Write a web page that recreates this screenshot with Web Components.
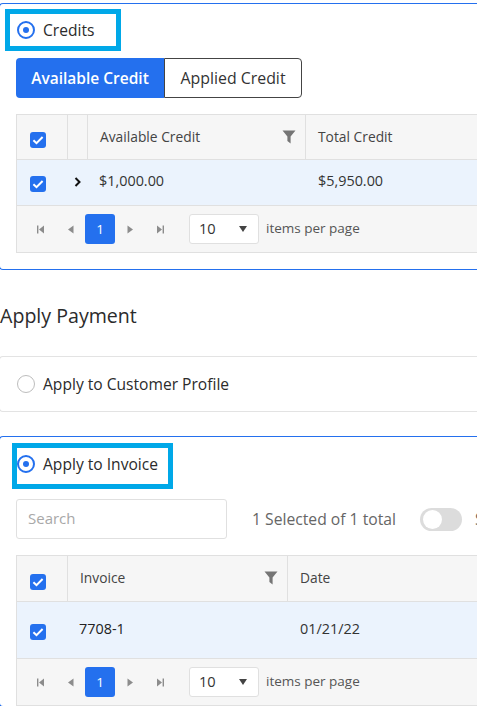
<!DOCTYPE html>
<html lang="en">
<head>
<meta charset="utf-8">
<title>Apply Payment</title>
<style>
  html, body { margin: 0; background: #fff; }
  body { font: 14px "Open Sans", "Noto Sans", sans-serif; color: #333; width: 477px; height: 706px; overflow: hidden; }
  .heading { margin: 31px 0 25px; font-size: 19.6px; line-height: 30px; color: #2b2b2b; }
  .mark-credits { margin: 5px 0 0 5px; }
  .mark-invoice { margin: 6px 0 0 12px; padding-bottom: 4px; }
  credit-tabs { margin: 7px 0 16px 16px; }
  grid-shell { margin-left: 16px; }
</style>
</head>
<body>
<pay-page>
  <pay-card accent style="padding-bottom:16px">
    <mark-box class="mark-credits" style="--w:116px;--h:42px;--pad:7px">
      <pay-radio checked>Credits</pay-radio>
    </mark-box>
    <credit-tabs></credit-tabs>
    <grid-shell>
      <grid-row head style="--row-h:44px">
        <grid-cell w="51" divider><grid-check></grid-check></grid-cell>
        <grid-cell w="20" divider></grid-cell>
        <grid-cell w="218" divider pad="12" filter>Available Credit</grid-cell>
        <grid-cell w="300" pad="12">Total Credit</grid-cell>
      </grid-row>
      <grid-row selected style="--row-h:45px">
        <grid-cell w="51"><grid-check></grid-check></grid-cell>
        <grid-cell w="20" chevron></grid-cell>
        <grid-cell w="218" pad="11" body>$1,000.00</grid-cell>
        <grid-cell w="300" pad="12" body>$5,950.00</grid-cell>
      </grid-row>
      <grid-pager></grid-pager>
    </grid-shell>
  </pay-card>

  <div class="heading">Apply Payment</div>

  <pay-card>
    <mark-box style="--w:auto;--h:54px;--pad:17px;--bw:0px">
      <pay-radio>Apply to Customer Profile</pay-radio>
    </mark-box>
  </pay-card>

  <pay-card accent style="margin-top:24px">
    <mark-box class="mark-invoice" style="--w:161px;--h:46px;--pad:0px">
      <pay-radio checked>Apply to Invoice</pay-radio>
    </mark-box>
    <grid-toolbar></grid-toolbar>
    <grid-shell>
      <grid-row head>
        <grid-cell w="51" divider><grid-check></grid-check></grid-cell>
        <grid-cell w="220" divider pad="12" filter>Invoice</grid-cell>
        <grid-cell w="300" pad="12">Date</grid-cell>
      </grid-row>
      <grid-row selected style="--row-h:56px">
        <grid-cell w="51"><grid-check></grid-check></grid-cell>
        <grid-cell w="220" pad="11" body strong>7708-1</grid-cell>
        <grid-cell w="300" pad="12" body>01/21/22</grid-cell>
      </grid-row>
      <grid-pager></grid-pager>
    </grid-shell>
  </pay-card>
</pay-page>

<script>
// Small helper so each element stays a few lines
function shadow(el, html) {
  el.attachShadow({ mode: 'open' }).innerHTML = html;
}

class PayPage extends HTMLElement {
  constructor() {
    super();
    shadow(this, `<style>:host { display: block; width: 477px; padding-top: 3px; overflow: hidden; }</style><slot></slot>`);
  }
}

class PayCard extends HTMLElement {
  constructor() {
    super();
    shadow(this, `<style>
      :host { display: block; width: 800px; box-sizing: border-box; border: 1px solid #e3e3e3; border-right: 0; border-radius: 4px 0 0 4px; margin-left: -1px; }
      :host([accent]) { border-color: #2470ee; }
    </style><slot></slot>`);
  }
}

class MarkBox extends HTMLElement {
  constructor() {
    super();
    shadow(this, `<style>
      :host { display: flex; align-items: center; box-sizing: border-box; width: var(--w); height: var(--h); padding-left: var(--pad); border: var(--bw, 5px) solid #00a8e8; }
    </style><slot></slot>`);
  }
}

class PayRadio extends HTMLElement {
  constructor() {
    super();
    shadow(this, `<style>
      :host { display: inline-flex; align-items: center; gap: 8px; font-size: 15.6px; color: #2b2b2b; white-space: nowrap; }
      i { display: block; width: 18px; height: 18px; box-sizing: border-box; border-radius: 50%; border: 1px solid #bdbdbd; background: #fff; position: relative; }
      :host([checked]) i { border: 2px solid #2470ee; }
      :host([checked]) i::after { content: ""; position: absolute; left: 4px; top: 4px; width: 6px; height: 6px; border-radius: 50%; background: #2470ee; }
    </style><i></i><slot></slot>`);
  }
}

class CreditTabs extends HTMLElement {
  constructor() {
    super();
    shadow(this, `<style>
      :host { display: flex; height: 40px; width: 286px; }
      div { display: flex; align-items: center; justify-content: center; box-sizing: border-box; }
      .on { width: 148px; background: #2470ee; color: #fff; font-weight: 600; font-size: 15.5px; border-radius: 4px 0 0 4px; }
      .off { width: 138px; background: #fff; color: #333; font-size: 15.9px; border: 1px solid #444; border-radius: 0 4px 4px 0; }
    </style><div class="on">Available Credit</div><div class="off">Applied Credit</div>`);
  }
}

class GridShell extends HTMLElement {
  constructor() {
    super();
    shadow(this, `<style>
      :host { display: block; width: 700px; box-sizing: border-box; border: 1px solid #e0e0e0; border-right: 0; background: #f6f6f6; }
    </style><slot></slot>`);
  }
}

class GridRow extends HTMLElement {
  constructor() {
    super();
    shadow(this, `<style>
      :host { display: flex; height: var(--row-h, 45px); border-bottom: 1px solid #e0e0e0; --check-top: 5px; }
      :host([head]) { --check-top: 8px; }
      :host([selected]) { background: #ebf3fd; }
    </style><slot></slot>`);
  }
}

class GridCell extends HTMLElement {
  connectedCallback() {
    if (this.shadowRoot) return;
    const pad = this.getAttribute('pad');
    const funnel = this.hasAttribute('filter')
      ? `<svg class="funnel" width="14" height="14" viewBox="0 0 14 14"><path fill="#757575" d="M.5.5h13L8.6 6.6V13.5L5.4 11V6.6z"/></svg>` : '';
    const chevron = this.hasAttribute('chevron')
      ? `<svg width="10" height="12" viewBox="0 0 10 12" style="margin:0 0 0 5px"><path d="M2.5 2l4 4-4 4" fill="none" stroke="#111" stroke-width="2"/></svg>` : '';
    shadow(this, `<style>
      :host { display: flex; align-items: center; box-sizing: border-box; height: 100%; width: ${this.getAttribute('w')}px; flex: none; padding-left: ${pad || 0}px; padding-bottom: 2px; font-size: 13.8px; color: #444; position: relative; }
      :host([divider]) { border-right: 1px solid #e0e0e0; }
      :host([body]) { font-size: 14.4px; color: #333; padding-bottom: 4px; }
      :host([strong]) { color: #222; }
      .funnel { position: absolute; right: 9px; top: 15px; }
    </style><slot></slot>${funnel}${chevron}`);
  }
}

class GridCheck extends HTMLElement {
  constructor() {
    super();
    shadow(this, `<style>
      :host { display: block; width: 16px; height: 16px; margin: var(--check-top) 0 0 13px; border-radius: 3px; background: #2470ee; }
      svg { display: block; }
    </style><svg width="16" height="16" viewBox="0 0 16 16"><path d="M3.4 8.2l3.1 3L12.6 5" fill="none" stroke="#fff" stroke-width="2"/></svg>`);
  }
}

class GridPager extends HTMLElement {
  constructor() {
    super();
    shadow(this, `<style>
      :host { display: flex; align-items: center; height: 46px; font-size: 13.5px; color: #555; }
      svg { display: block; flex: none; }
      .nav { width: 30px; height: 30px; display: flex; align-items: center; justify-content: center; flex: none; }
      .num { width: 30px; height: 30px; display: flex; align-items: center; justify-content: center; border-radius: 3px; background: #2470ee; color: #fff; font-size: 13.5px; flex: none; }
      .size { display: flex; align-items: center; justify-content: space-between; box-sizing: border-box; width: 70px; height: 30px; margin: 0 7px 0 14px; padding: 0 11px 0 9px; background: #fff; border: 1px solid #e0e0e0; border-radius: 3px; color: #333; font-size: 14.6px; }
      .txt { margin-top: -3px; }
    </style>
    <span class="nav" style="margin-left:8px"><svg width="9" height="9" viewBox="0 0 9 9"><path fill="#8c8c8c" d="M1 .5h1.4v8H1zM8 .5v8L3 4.5z"/></svg></span>
    <span class="nav"><svg width="7" height="9" viewBox="0 0 7 9"><path fill="#8c8c8c" d="M6.5.5v8L1 4.5z"/></svg></span>
    <span class="num">1</span>
    <span class="nav"><svg width="7" height="9" viewBox="0 0 7 9"><path fill="#8c8c8c" d="M.5.5v8L6 4.5z"/></svg></span>
    <span class="nav"><svg width="9" height="9" viewBox="0 0 9 9"><path fill="#8c8c8c" d="M8 .5H6.6v8H8zM1 .5v8l5-4z"/></svg></span>
    <span class="size"><span class="txt">10</span><svg width="8" height="6" viewBox="0 0 8 6"><path fill="#444" d="M0 0h8L4 6z"/></svg></span>
    <span class="txt">items per page</span>`);
  }
}

class GridToolbar extends HTMLElement {
  constructor() {
    super();
    shadow(this, `<style>
      :host { display: flex; align-items: center; margin: 10px 0 16px 16px; height: 40px; font-size: 15.7px; color: #666; white-space: nowrap; }
      .search { box-sizing: border-box; width: 211px; height: 40px; display: flex; align-items: center; padding: 0 0 2px 11px; border: 1px solid #e0e0e0; border-radius: 3px; color: #a8a8a8; background: #fff; font-size: 15px; margin-right: 25px; }
      .count { width: 144px; }
      .toggle { width: 42px; height: 23px; margin-left: 24px; margin-right: 13px; border-radius: 12px; background: #dcdcdc; position: relative; flex: none; }
      .toggle::after { content: ""; position: absolute; left: 3px; top: 2px; width: 19px; height: 19px; border-radius: 50%; background: #fff; }
    </style>
    <div class="search">Search</div>
    <span class="count">1 Selected of 1 total</span>
    <div class="toggle"></div>
    <span>S</span>`);
  }
}

customElements.define('pay-page', PayPage);
customElements.define('pay-card', PayCard);
customElements.define('mark-box', MarkBox);
customElements.define('pay-radio', PayRadio);
customElements.define('credit-tabs', CreditTabs);
customElements.define('grid-shell', GridShell);
customElements.define('grid-row', GridRow);
customElements.define('grid-cell', GridCell);
customElements.define('grid-check', GridCheck);
customElements.define('grid-pager', GridPager);
customElements.define('grid-toolbar', GridToolbar);
</script>
</body>
</html>
